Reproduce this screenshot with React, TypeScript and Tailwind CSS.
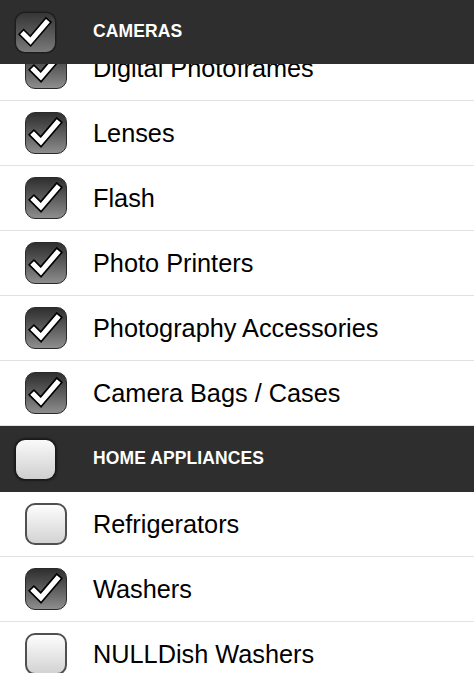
import React from "react";

function Check({ size }: { size: number }) {
  return (
    <svg
      width={size}
      height={size}
      viewBox="0 0 42 42"
      className="absolute left-0 top-0 overflow-visible"
    >
      <path
        d="M8.5 23.5 L16 31 L33.5 10.5"
        fill="none"
        stroke="#000"
        strokeWidth={9}
        strokeLinecap="square"
        strokeLinejoin="miter"
      />
      <path
        d="M8.5 23.5 L16 31 L33.5 10.5"
        fill="none"
        stroke="#fff"
        strokeWidth={5.5}
        strokeLinecap="square"
        strokeLinejoin="miter"
      />
    </svg>
  );
}

function RowBox({ checked }: { checked: boolean }) {
  if (checked) {
    return (
      <div className="relative w-[42px] h-[42px] shrink-0 rounded-[10px] border-[1.5px] border-[#2a2a2a] bg-linear-to-b from-[#2f2f2f] to-[#8e8e8e]">
        <Check size={39} />
      </div>
    );
  }
  return (
    <div className="relative w-[42px] h-[42px] shrink-0 rounded-[10px] border-2 border-[#505050] bg-linear-to-b from-[#fdfdfd] to-[#d3d3d3]" />
  );
}

function HeaderBox({ checked }: { checked: boolean }) {
  if (checked) {
    return (
      <div className="relative w-[39px] h-[39px] shrink-0 rounded-[9px] bg-linear-to-b from-[#363636] to-[#7a7a7a] shadow-[0_0_0_1.5px_#1e1e1e]">
        <Check size={38} />
      </div>
    );
  }
  return (
    <div className="relative w-[39px] h-[39px] shrink-0 rounded-[9px] bg-linear-to-b from-[#fafafa] to-[#cfcfcf] shadow-[0_0_0_1.5px_#1a1a1a,0_0_3px_1px_#111]" />
  );
}

function Row({ label, checked }: { label: string; checked: boolean }) {
  return (
    <div className="flex items-center h-[65px] border-b border-[#e2e2e2] pl-[25px] bg-white">
      <RowBox checked={checked} />
      <span className="ml-[26px] pt-[2px] text-[25.3px] leading-none text-black whitespace-nowrap">
        {label}
      </span>
    </div>
  );
}

function SectionHeader({
  label,
  checked,
  className = "",
}: {
  label: string;
  checked: boolean;
  className?: string;
}) {
  return (
    <div className={`flex items-center bg-[#2e2e2e] pl-[16px] ${className}`}>
      <HeaderBox checked={checked} />
      <span className="ml-[38px] text-[17.5px] font-bold leading-none text-white tracking-[0.1px]">
        {label}
      </span>
    </div>
  );
}

export default function App() {
  return (
    <div
      className="relative w-[474px] h-[673px] overflow-hidden bg-white"
      style={{ fontFamily: '"Liberation Sans", Arial, Helvetica, sans-serif' }}
    >
      <div className="flex flex-col mt-[36px]">
        <Row label="Digital Photoframes" checked />
        <Row label="Lenses" checked />
        <Row label="Flash" checked />
        <Row label="Photo Printers" checked />
        <Row label="Photography Accessories" checked />
        <Row label="Camera Bags / Cases" checked />
        <SectionHeader label="HOME APPLIANCES" checked={false} className="h-[66px]" />
        <Row label="Refrigerators" checked={false} />
        <Row label="Washers" checked />
        <Row label="NULLDish Washers" checked={false} />
      </div>
      <SectionHeader
        label="CAMERAS"
        checked
        className="absolute left-0 right-0 top-0 h-[64px]"
      />
    </div>
  );
}
